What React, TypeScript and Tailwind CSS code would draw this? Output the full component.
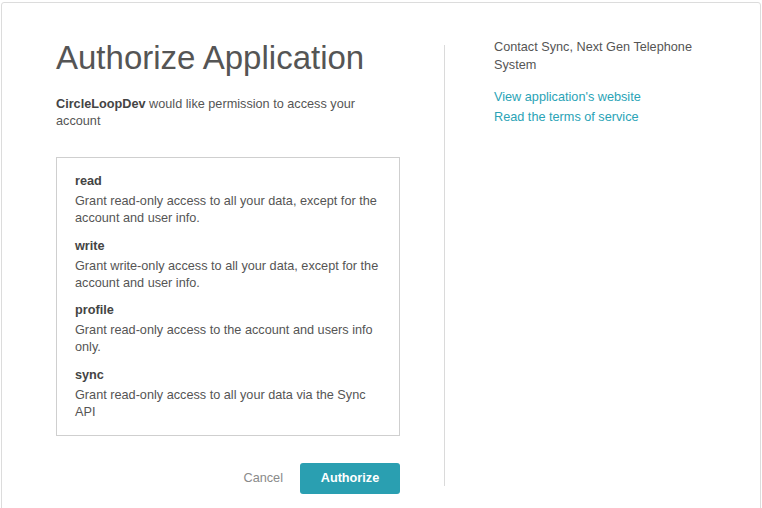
import React from "react";

// Scopes requested by the application
const scopes = [
  { name: "read", desc: "Grant read-only access to all your data, except for the account and user info." },
  { name: "write", desc: "Grant write-only access to all your data, except for the account and user info." },
  { name: "profile", desc: "Grant read-only access to the account and users info only." },
  { name: "sync", desc: "Grant read-only access to all your data via the Sync API" },
];

export default function App() {
  return (
    <div
      className="min-h-screen bg-white pt-[2px] px-px text-[12.7px] leading-[17px] text-[#555]"
      style={{ fontFamily: '"Liberation Sans", Arial, Helvetica, sans-serif' }}
    >
      <div className="min-h-[540px] border border-[#dcdcdc] rounded-[3px] pl-[54px] pt-[33px] flex">
        {/* Left column - request and scopes */}
        <div className="w-[344px] flex flex-col">
          <h1 className="text-[33px] leading-[43px] text-[#555] font-normal">Authorize Application</h1>
          <p className="mt-[17px]">
            <span className="font-bold text-[#444]">CircleLoopDev</span> would like permission to access your account
          </p>
          <div className="mt-[27px] border border-[#cfcfcf] pl-[18px] pr-[14px] pt-[15px] pb-[14px] flex flex-col gap-[10.5px]">
            {scopes.map((s) => (
              <div key={s.name}>
                <div className="font-bold text-[#444] mb-[3px]">{s.name}</div>
                <div>{s.desc}</div>
              </div>
            ))}
          </div>
          <div className="mt-[27px] flex items-center justify-end gap-[17px]">
            <button className="text-[#8a8a8a]">Cancel</button>
            <button className="w-[100px] h-[31px] rounded-[3px] bg-[#2a9fb1] text-white font-bold">Authorize</button>
          </div>
        </div>

        {/* Divider */}
        <div className="ml-[44px] mt-[9px] mb-[8px] w-px bg-[#dadada] self-stretch max-h-[441px]" />

        {/* Right column - app info */}
        <div className="ml-[49px] w-[215px] pt-[2px]">
          <p className="leading-[18px]">Contact Sync, Next Gen Telephone System</p>
          <div className="mt-[15px] flex flex-col gap-[3px] text-[#2aa3b6]">
            <a href="#">View application's website</a>
            <a href="#">Read the terms of service</a>
          </div>
        </div>
      </div>
    </div>
  );
}
